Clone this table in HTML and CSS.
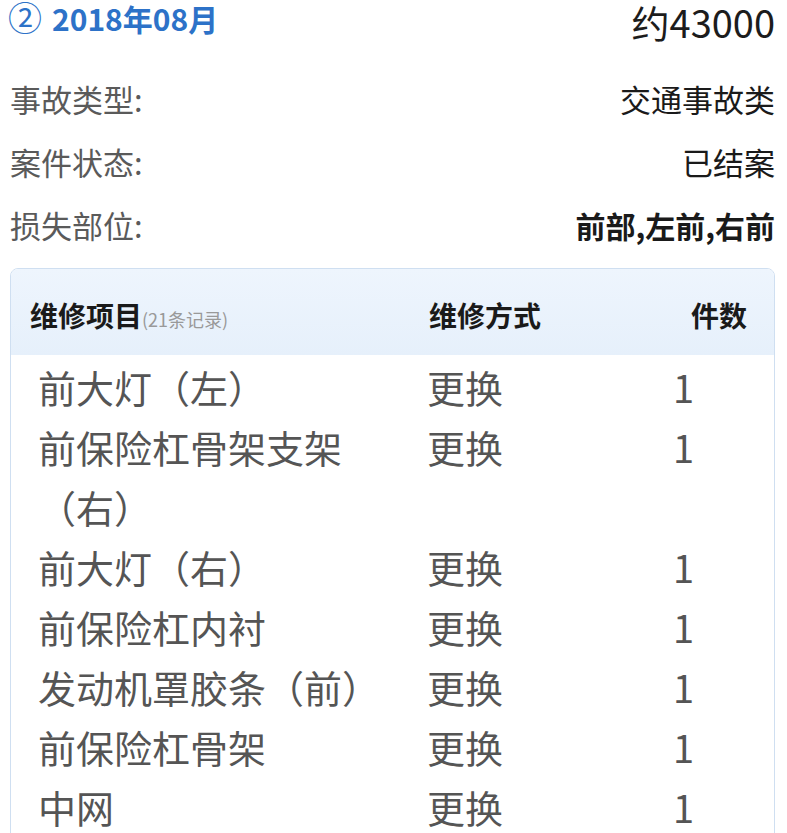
FILE: index.html
```html
<!DOCTYPE html>
<html lang="zh-CN">
<head>
<meta charset="utf-8">
<link rel="stylesheet" href="styles.css">
</head>
<body>
<div class="page">
  <div class="top">
    <div class="date"><span class="circ">②</span><span class="date-text">2018年08月</span></div>
    <div class="amount">约43000</div>
  </div>
  <div class="info-row"><span class="label">事故类型:</span><span class="value">交通事故类</span></div>
  <div class="info-row"><span class="label">案件状态:</span><span class="value">已结案</span></div>
  <div class="info-row"><span class="label">损失部位:</span><span class="value bold">前部,左前,右前</span></div>
  <div class="table">
    <div class="thead">
      <div class="th-item">维修项目<span class="count-note">(21条记录)</span></div>
      <div class="th-method">维修方式</div>
      <div class="th-qty">件数</div>
    </div>
    <div class="tbody">
      <div class="tr"><div class="td-item">前大灯（左）</div><div class="td-method">更换</div><div class="td-qty">1</div></div>
      <div class="tr"><div class="td-item">前保险杠骨架支架（右）</div><div class="td-method">更换</div><div class="td-qty">1</div></div>
      <div class="tr"><div class="td-item">前大灯（右）</div><div class="td-method">更换</div><div class="td-qty">1</div></div>
      <div class="tr"><div class="td-item">前保险杠内衬</div><div class="td-method">更换</div><div class="td-qty">1</div></div>
      <div class="tr"><div class="td-item">发动机罩胶条（前）</div><div class="td-method">更换</div><div class="td-qty">1</div></div>
      <div class="tr"><div class="td-item">前保险杠骨架</div><div class="td-method">更换</div><div class="td-qty">1</div></div>
      <div class="tr"><div class="td-item">中网</div><div class="td-method">更换</div><div class="td-qty">1</div></div>
      <div class="tr"><div class="td-item">前保险杠</div><div class="td-method">更换</div><div class="td-qty">1</div></div>
    </div>
  </div>
</div>
</body>
</html>
```

FILE: styles.css
```css
html, body {
  margin: 0;
  padding: 0;
  background: #ffffff;
  overflow: hidden;
}
body {
  font-family: "Noto Sans CJK SC", "Noto Sans", sans-serif;
  color: #222;
}
.page {
  width: 787px;
  height: 833px;
  overflow: hidden;
}
.top {
  display: flex;
  justify-content: space-between;
  align-items: flex-start;
  height: 44px;
  padding: 0 12px 0 8px;
}
.date {
  display: flex;
  align-items: center;
  gap: 10px;
  height: 36px;
  color: #2d72c8;
}
.circ {
  font-size: 34px;
  line-height: 36px;
  font-weight: 400;
  margin-top: -2px;
}
.date-text {
  font-size: 30px;
  line-height: 36px;
  font-weight: 700;
}
.amount {
  font-size: 38px;
  line-height: 44px;
  color: #1c1c1c;
}
.info-row {
  display: flex;
  justify-content: space-between;
  align-items: center;
  height: 63px;
  padding: 0 12px 0 10px;
}
.top + .info-row {
  margin-top: 23px;
}
.label {
  font-size: 31px;
  color: #5a5a5a;
}
.value {
  font-size: 31px;
  color: #1a1a1a;
}
.value.bold {
  font-size: 30px;
  font-weight: 700;
}
.table {
  margin: 12px 12px 0 10px;
  border: 1.5px solid #cfdff1;
  border-radius: 8px;
  overflow: hidden;
}
.thead {
  display: grid;
  grid-template-columns: 399px 262px 1fr;
  align-items: center;
  height: 86px;
  box-sizing: border-box;
  padding: 6px 0 0 19px;
  background: linear-gradient(#eef5fd, #e6f0fb);
  font-size: 28px;
  font-weight: 700;
  color: #1a1a1a;
}
.count-note {
  font-size: 18px;
  font-weight: 400;
  color: #999;
}
.tbody {
  padding: 2px 0 0 27px;
}
.tr {
  display: grid;
  grid-template-columns: 389px 240px 1fr;
  font-size: 38px;
  line-height: 60px;
  color: #555;
}
.td-item {
  padding-right: 20px;
}
.td-qty {
  padding-left: 6px;
}
```
